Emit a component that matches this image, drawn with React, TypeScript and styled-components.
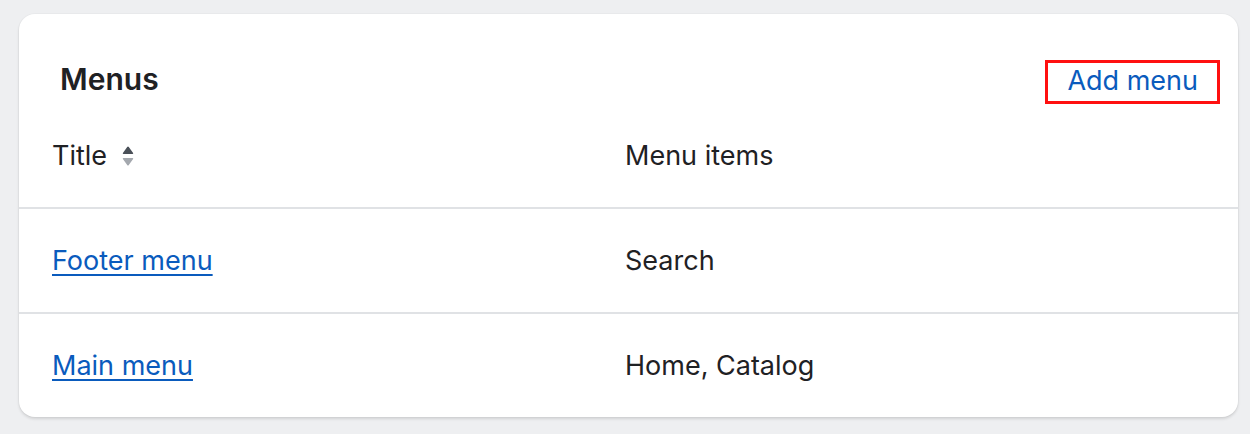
import styled, { createGlobalStyle } from 'styled-components';

const GlobalStyle = createGlobalStyle`
  *, *::before, *::after {
    box-sizing: border-box;
  }
  body {
    margin: 0;
    background: #eeeff1;
    font-family: Inter, "Liberation Sans", sans-serif;
    color: #1f2124;
  }
`;

const menus = [
  { title: 'Footer menu', items: 'Search' },
  { title: 'Main menu', items: 'Home, Catalog' },
];

const App = () => {
  return (
    <Page>
      <GlobalStyle />
      <Card>
        <Header>
          <Heading>Menus</Heading>
          <AddButton>Add menu</AddButton>
        </Header>
        <Table>
          <HeadRow>
            <Cell>
              Title
              <SortIcon width="12" height="20" viewBox="0 0 12 20">
                <path d="M5.2 1.1 L0.9 7 Q0.4 8 1.5 8 H10.5 Q11.6 8 11.1 7 L6.8 1.1 Q6 0 5.2 1.1 Z" fill="#4a5058" />
                <path d="M5.2 18.9 L0.9 13 Q0.4 12 1.5 12 H10.5 Q11.6 12 11.1 13 L6.8 18.9 Q6 20 5.2 18.9 Z" fill="#a4a8ae" />
              </SortIcon>
            </Cell>
            <Cell>Menu items</Cell>
          </HeadRow>
          {menus.map((m) => (
            <Row key={m.title}>
              <Cell>
                <MenuLink href="#">{m.title}</MenuLink>
              </Cell>
              <Cell>{m.items}</Cell>
            </Row>
          ))}
        </Table>
      </Card>
    </Page>
  );
};

export default App;

const Page = styled.div`
  padding: 14px 12px 16px 19px;
`;

const Card = styled.div`
  background: #ffffff;
  border-radius: 16px;
  box-shadow: 0 2px 3px rgba(0, 0, 0, 0.12), 0 0 0 1px rgba(0, 0, 0, 0.02);
  overflow: hidden;
`;

const Header = styled.div`
  display: flex;
  align-items: center;
  justify-content: space-between;
  padding: 46px 18px 0 41px;
`;

const Heading = styled.h2`
  margin: 0 0 6px;
  font-size: 30px;
  font-weight: 600;
  color: #1f2124;
`;

const AddButton = styled.button`
  height: 44px;
  padding: 0 19px 4px;
  border: 3px solid #ff1010;
  background: #ffffff;
  color: #0a5bbd;
  font-family: inherit;
  font-size: 27px;
  cursor: pointer;
`;

const Table = styled.div`
  display: flex;
  flex-direction: column;
`;

const Row = styled.div`
  display: grid;
  grid-template-columns: 573px 1fr;
  align-items: center;
  height: 105px;
  padding: 0 33px;
  border-top: 2px solid #e0e2e5;
  font-size: 27px;
`;

const HeadRow = styled(Row)`
  height: 103px;
  border-top: none;
`;

const Cell = styled.div`
  display: flex;
  align-items: center;
`;

const SortIcon = styled.svg`
  margin-left: 15px;
`;

const MenuLink = styled.a`
  color: #0a5bbd;
  text-decoration: underline;
  text-decoration-thickness: 2px;
  text-underline-offset: 4px;
`;
